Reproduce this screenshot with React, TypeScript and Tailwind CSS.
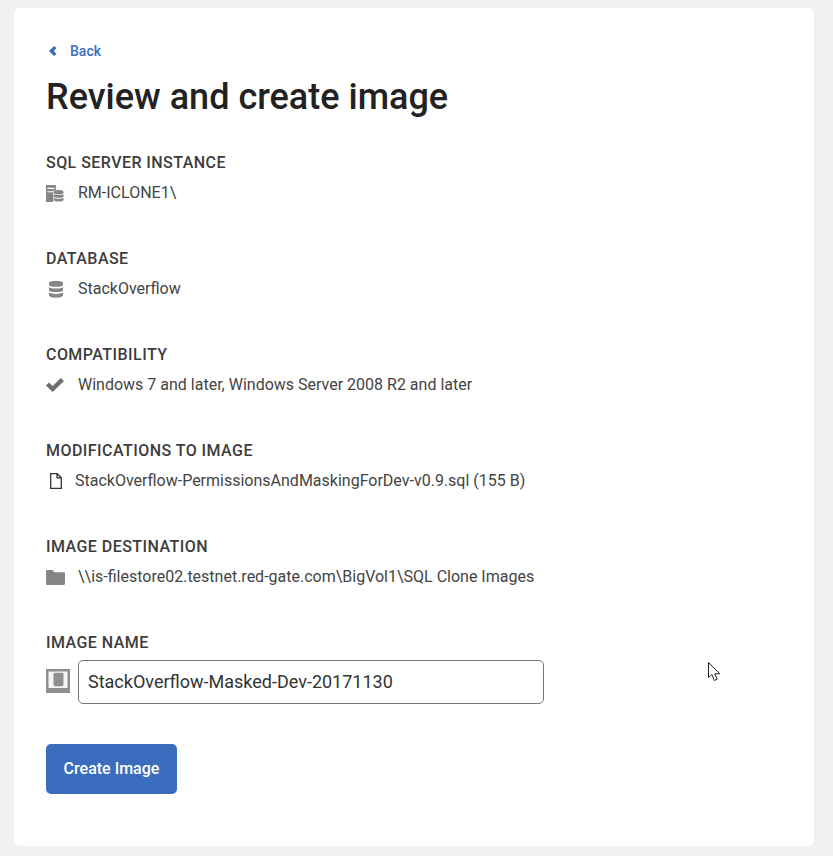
import React from "react";

const G = "#858585";

function ServerDb() {
  return (
    <svg width="18" height="17" viewBox="0 0 20 18" className="block" preserveAspectRatio="none">
      <path fill={G} d="M0 0h11v18H0z" />
      <path fill="#fff" d="M1.500 3h8v1.300h-8zM1.500 6.500h8v1.300h-8z" />
      <path fill="#fff" d="M8 6h12v12H8z" />
      <ellipse cx="14" cy="7.600" rx="5.500" ry="2.200" fill={G} />
      <path fill={G} d="M8.500 9.400c1 1.400 10 1.400 11 0v3c-1 1.500-10 1.500-11 0z" />
      <path fill={G} d="M8.500 13.600c1 1.400 10 1.400 11 0v2.200c-1 2.200-10 2.200-11 0z" />
    </svg>
  );
}

function Db() {
  return (
    <svg width="14" height="18" viewBox="0 0 14 18" className="block">
      <path fill={G} d="M0 2.600C0 .4 14 .4 14 2.600v2.600c-1.300 2-12.700 2-14 0z" />
      <path fill={G} d="M0 7.200c1.300 1.800 12.700 1.800 14 0v3.400c-1.300 2-12.700 2-14 0z" />
      <path fill={G} d="M0 12.600c1.300 1.800 12.700 1.800 14 0v3c-1.300 3-12.700 3-14 0z" />
    </svg>
  );
}

function Check() {
  return (
    <svg width="18" height="14" viewBox="0 0 18 14" className="block">
      <path fill="#6e6e6e" d="M0 7.400 3 4.400l3.600 3.500L14.900 0 18 3 6.600 14z" />
    </svg>
  );
}

function FileIcon() {
  return (
    <svg width="12" height="16" viewBox="0 0 12 16" className="block">
      <path fill="none" stroke="#333" strokeWidth="1.300" d="M.7.7h6.600l4 4v10.600H.7zM7 .9v4h4" />
    </svg>
  );
}

function Folder() {
  return (
    <svg width="19" height="15" viewBox="0 0 19 15" className="block">
      <path fill={G} d="M0 1.200C0 .5.500 0 1.200 0h5.300l2 2.200h9.300c.7 0 1.200.5 1.200 1.200v10.400c0 .7-.5 1.200-1.200 1.200H1.200C.5 15 0 14.500 0 13.800z" />
    </svg>
  );
}

function ImageIcon() {
  return (
    <svg width="24" height="24" viewBox="0 0 24 24" className="mb-[2px] block">
      <path fill="#8f8f8f" d="M0 0h24v24H0z" />
      <path fill="#f4f4f4" d="M2.500 2.500h19V19h-19z" />
      <rect x="7.500" y="3.800" width="10" height="13.400" rx="1.800" fill="#8f8f8f" />
    </svg>
  );
}

function Cursor() {
  return (
    <svg width="14" height="20" viewBox="0 0 14 20" className="block">
      <path
        fill="#fff"
        stroke="#222"
        strokeWidth="1"
        d="M.5.5v15l3.400-3 2.400 6 2.900-1.300-2.400-5.400h5z"
      />
    </svg>
  );
}

function Section({
  label,
  icon,
  children,
  gap = "gap-[8px]",
}: {
  label: string;
  icon: React.ReactNode;
  children: React.ReactNode;
  gap?: string;
}) {
  return (
    <section className="h-[96px]">
      <h2 className="text-[16px] leading-[20px] font-medium tracking-[0.45px] text-[#3d3d3d] uppercase">
        {label}
      </h2>
      <div className={`mt-[10px] flex h-[20px] items-center ${gap}`}>
        <span className="flex w-[24px] shrink-0 items-center">{icon}</span>
        <span className="text-[16px] leading-[20px] text-[#444444]">{children}</span>
      </div>
    </section>
  );
}

export default function App() {
  return (
    <div className="h-[856px] bg-[#f1f1f1] pt-[8px] pr-[19px] pb-[10px] pl-[14px] font-['Roboto',sans-serif]">
      <main className="relative h-[838px] rounded-[6px] bg-white pt-[33px] pl-[32px]">
        <a className="flex h-[20px] items-center text-[14px] font-medium text-[#3b6dbf]">
          <svg width="8" height="10" viewBox="0 0 8 10" className="mr-[13px] ml-[3px] block">
            <path fill="#3b6dbf" d="M5 0 7.500 2 4.800 5l2.700 3L5 10 0 5z" />
          </svg>
          Back
        </a>
        <h1 className="mt-[14px] text-[36px] leading-[44px] font-medium text-[#222222]">
          Review and create image
        </h1>
        <div className="mt-[34px]">
          <Section label="SQL Server Instance" icon={<ServerDb />}>
            RM-ICLONE1\
          </Section>
          <Section label="Database" icon={<span className="ml-[3px]"><Db /></span>}>
            StackOverflow
          </Section>
          <Section label="Compatibility" icon={<Check />}>
            Windows 7 and later, Windows Server 2008 R2 and later
          </Section>
          <Section
            label="Modifications to Image"
            icon={<span className="ml-[4px]"><FileIcon /></span>}
            gap="gap-[5px]"
          >
            StackOverflow-PermissionsAndMaskingForDev-v0.9.sql (155 B)
          </Section>
          <Section label="Image Destination" icon={<Folder />}>
            \\is-filestore02.testnet.red-gate.com\BigVol1\SQL Clone Images
          </Section>
          <section>
            <h2 className="text-[16px] leading-[20px] font-medium tracking-[0.45px] text-[#3d3d3d] uppercase">
              Image Name
            </h2>
            <div className="mt-[7px] flex items-center gap-[8px]">
              <ImageIcon />
              <input
                readOnly
                value="StackOverflow-Masked-Dev-20171130"
                className="h-[44px] w-[466px] rounded-[5px] border border-[#777777] bg-white px-[9px] pb-[2px] text-[18px] text-[#333333] outline-none"
              />
            </div>
          </section>
          <button className="mt-[40px] h-[50px] w-[131px] rounded-[5px] bg-[#3b6dbf] text-[16px] font-medium text-white">
            Create Image
          </button>
        </div>
        <span className="absolute top-[654px] left-[694px]">
          <Cursor />
        </span>
      </main>
    </div>
  );
}
